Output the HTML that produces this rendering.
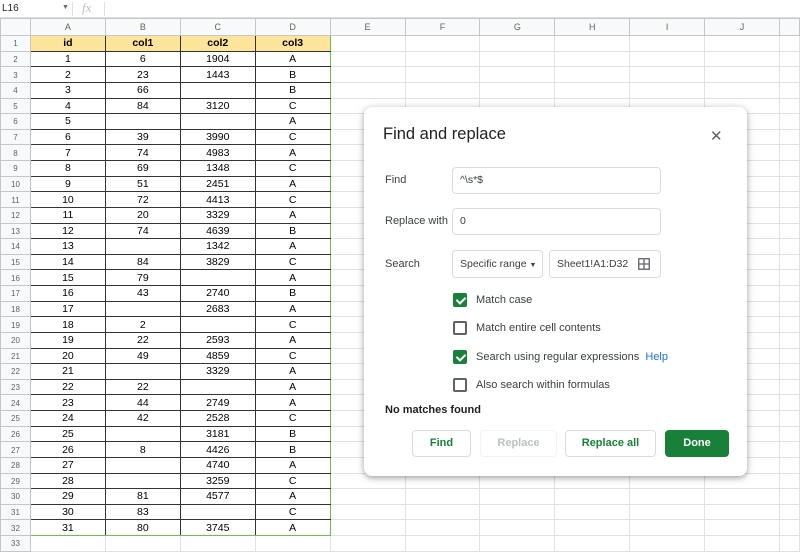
<!DOCTYPE html>
<html><head><meta charset="utf-8"><style>
*{box-sizing:border-box;margin:0;padding:0}
body{width:800px;height:548px;overflow:hidden;background:#fff;font-family:"Liberation Sans",Arial,sans-serif;position:relative}
.fb{position:absolute;left:0;top:0;width:800px;height:18px;border-bottom:1px solid #e0e0e0;background:#fff}
.fb .nm{position:absolute;left:2px;top:3px;font-size:10px;color:#222}
.fb .ar{position:absolute;left:62px;top:4px;font-size:7px;color:#666}
.fb .sep{position:absolute;left:72px;top:2px;width:1px;height:14px;background:#e0e0e0}
.fb .fx{position:absolute;left:82px;top:0px;font-size:13px;color:#c0c0c0;font-style:italic;font-family:"Liberation Serif",serif}
.fb .sep2{position:absolute;left:104px;top:2px;width:1px;height:14px;background:#e0e0e0}
table{position:absolute;left:0;top:18px;border-collapse:collapse;table-layout:fixed}
td{border:1px solid #e2e2e2;height:15.63px;font-size:10.5px;text-align:center;color:#000;padding:1px 0 0 0;line-height:13px;overflow:hidden;white-space:nowrap}
tr.h td{height:17px;background:#f8f9fa;color:#5f6368;font-size:9px;border-color:#c4c7c5}
td.r{background:#f8f9fa;color:#5f6368;font-size:8px;border-color:#c4c7c5}
td.d{border:1px solid #333}
tr.t td.d{background:#fde49b;font-weight:bold}
td.g{border-right:1px solid #6cc14b}
tr.last td.d{border-bottom:1px solid #6cc14b}
.dlg{position:absolute;left:364px;top:107px;width:383px;height:369px;background:#fff;border-radius:8px;box-shadow:0 2px 6px rgba(0,0,0,.3),0 1px 12px rgba(0,0,0,.1);color:#3c4043}
.dlg .ttl{position:absolute;left:19px;top:18px;font-size:16.5px;color:#202124}
.dlg .x{position:absolute;left:346px;top:20px;font-size:15px;color:#5f6368}
.lb{position:absolute;left:21px;font-size:11px;color:#3c4043}
.in{position:absolute;border:1px solid #dadce0;border-radius:4px;font-size:10.5px;padding-left:7px;color:#3c4043}
.cb{position:absolute;left:89px;width:14px;height:14px;border:2px solid #5f6368;border-radius:2px}
.cb.on{background:#188038;border-color:#188038}
.cb.on:after{content:"";position:absolute;left:3px;top:0px;width:4px;height:7px;border:solid #fff;border-width:0 2px 2px 0;transform:rotate(45deg)}
.cl{position:absolute;left:112px;font-size:11px;color:#3c4043}
.bt{position:absolute;top:323px;height:27px;border:1px solid #dadce0;border-radius:4px;font-size:11px;font-weight:bold;color:#188038;text-align:center;line-height:25px}
</style></head><body>
<div class="fb"><span class="nm">L16</span><span class="ar">▼</span><span class="sep"></span><span class="fx">fx</span><span class="sep2"></span></div>
<table>
<colgroup><col style="width:30px"><col style="width:75px"><col style="width:75px"><col style="width:75px"><col style="width:75px"><col style="width:75px"><col style="width:75px"><col style="width:75px"><col style="width:75px"><col style="width:75px"><col style="width:75px"><col style="width:20px"></colgroup>
<tr class="h"><td></td><td>A</td><td>B</td><td>C</td><td>D</td><td>E</td><td>F</td><td>G</td><td>H</td><td>I</td><td>J</td><td></td></tr>
<tr class="t"><td class="r">1</td><td class="d">id</td><td class="d">col1</td><td class="d">col2</td><td class="d g">col3</td><td></td><td></td><td></td><td></td><td></td><td></td><td></td></tr>
<tr><td class="r">2</td><td class="d">1</td><td class="d">6</td><td class="d">1904</td><td class="d g">A</td><td></td><td></td><td></td><td></td><td></td><td></td><td></td></tr>
<tr><td class="r">3</td><td class="d">2</td><td class="d">23</td><td class="d">1443</td><td class="d g">B</td><td></td><td></td><td></td><td></td><td></td><td></td><td></td></tr>
<tr><td class="r">4</td><td class="d">3</td><td class="d">66</td><td class="d"></td><td class="d g">B</td><td></td><td></td><td></td><td></td><td></td><td></td><td></td></tr>
<tr><td class="r">5</td><td class="d">4</td><td class="d">84</td><td class="d">3120</td><td class="d g">C</td><td></td><td></td><td></td><td></td><td></td><td></td><td></td></tr>
<tr><td class="r">6</td><td class="d">5</td><td class="d"></td><td class="d"></td><td class="d g">A</td><td></td><td></td><td></td><td></td><td></td><td></td><td></td></tr>
<tr><td class="r">7</td><td class="d">6</td><td class="d">39</td><td class="d">3990</td><td class="d g">C</td><td></td><td></td><td></td><td></td><td></td><td></td><td></td></tr>
<tr><td class="r">8</td><td class="d">7</td><td class="d">74</td><td class="d">4983</td><td class="d g">A</td><td></td><td></td><td></td><td></td><td></td><td></td><td></td></tr>
<tr><td class="r">9</td><td class="d">8</td><td class="d">69</td><td class="d">1348</td><td class="d g">C</td><td></td><td></td><td></td><td></td><td></td><td></td><td></td></tr>
<tr><td class="r">10</td><td class="d">9</td><td class="d">51</td><td class="d">2451</td><td class="d g">A</td><td></td><td></td><td></td><td></td><td></td><td></td><td></td></tr>
<tr><td class="r">11</td><td class="d">10</td><td class="d">72</td><td class="d">4413</td><td class="d g">C</td><td></td><td></td><td></td><td></td><td></td><td></td><td></td></tr>
<tr><td class="r">12</td><td class="d">11</td><td class="d">20</td><td class="d">3329</td><td class="d g">A</td><td></td><td></td><td></td><td></td><td></td><td></td><td></td></tr>
<tr><td class="r">13</td><td class="d">12</td><td class="d">74</td><td class="d">4639</td><td class="d g">B</td><td></td><td></td><td></td><td></td><td></td><td></td><td></td></tr>
<tr><td class="r">14</td><td class="d">13</td><td class="d"></td><td class="d">1342</td><td class="d g">A</td><td></td><td></td><td></td><td></td><td></td><td></td><td></td></tr>
<tr><td class="r">15</td><td class="d">14</td><td class="d">84</td><td class="d">3829</td><td class="d g">C</td><td></td><td></td><td></td><td></td><td></td><td></td><td></td></tr>
<tr><td class="r">16</td><td class="d">15</td><td class="d">79</td><td class="d"></td><td class="d g">A</td><td></td><td></td><td></td><td></td><td></td><td></td><td></td></tr>
<tr><td class="r">17</td><td class="d">16</td><td class="d">43</td><td class="d">2740</td><td class="d g">B</td><td></td><td></td><td></td><td></td><td></td><td></td><td></td></tr>
<tr><td class="r">18</td><td class="d">17</td><td class="d"></td><td class="d">2683</td><td class="d g">A</td><td></td><td></td><td></td><td></td><td></td><td></td><td></td></tr>
<tr><td class="r">19</td><td class="d">18</td><td class="d">2</td><td class="d"></td><td class="d g">C</td><td></td><td></td><td></td><td></td><td></td><td></td><td></td></tr>
<tr><td class="r">20</td><td class="d">19</td><td class="d">22</td><td class="d">2593</td><td class="d g">A</td><td></td><td></td><td></td><td></td><td></td><td></td><td></td></tr>
<tr><td class="r">21</td><td class="d">20</td><td class="d">49</td><td class="d">4859</td><td class="d g">C</td><td></td><td></td><td></td><td></td><td></td><td></td><td></td></tr>
<tr><td class="r">22</td><td class="d">21</td><td class="d"></td><td class="d">3329</td><td class="d g">A</td><td></td><td></td><td></td><td></td><td></td><td></td><td></td></tr>
<tr><td class="r">23</td><td class="d">22</td><td class="d">22</td><td class="d"></td><td class="d g">A</td><td></td><td></td><td></td><td></td><td></td><td></td><td></td></tr>
<tr><td class="r">24</td><td class="d">23</td><td class="d">44</td><td class="d">2749</td><td class="d g">A</td><td></td><td></td><td></td><td></td><td></td><td></td><td></td></tr>
<tr><td class="r">25</td><td class="d">24</td><td class="d">42</td><td class="d">2528</td><td class="d g">C</td><td></td><td></td><td></td><td></td><td></td><td></td><td></td></tr>
<tr><td class="r">26</td><td class="d">25</td><td class="d"></td><td class="d">3181</td><td class="d g">B</td><td></td><td></td><td></td><td></td><td></td><td></td><td></td></tr>
<tr><td class="r">27</td><td class="d">26</td><td class="d">8</td><td class="d">4426</td><td class="d g">B</td><td></td><td></td><td></td><td></td><td></td><td></td><td></td></tr>
<tr><td class="r">28</td><td class="d">27</td><td class="d"></td><td class="d">4740</td><td class="d g">A</td><td></td><td></td><td></td><td></td><td></td><td></td><td></td></tr>
<tr><td class="r">29</td><td class="d">28</td><td class="d"></td><td class="d">3259</td><td class="d g">C</td><td></td><td></td><td></td><td></td><td></td><td></td><td></td></tr>
<tr><td class="r">30</td><td class="d">29</td><td class="d">81</td><td class="d">4577</td><td class="d g">A</td><td></td><td></td><td></td><td></td><td></td><td></td><td></td></tr>
<tr><td class="r">31</td><td class="d">30</td><td class="d">83</td><td class="d"></td><td class="d g">C</td><td></td><td></td><td></td><td></td><td></td><td></td><td></td></tr>
<tr class="last"><td class="r">32</td><td class="d">31</td><td class="d">80</td><td class="d">3745</td><td class="d g">A</td><td></td><td></td><td></td><td></td><td></td><td></td><td></td></tr>
<tr><td class="r">33</td><td></td><td></td><td></td><td></td><td></td><td></td><td></td><td></td><td></td><td></td><td></td></tr>
</table>
<div class="dlg">
<div class="ttl">Find and replace</div>
<div class="x">✕</div>
<div class="lb" style="top:67px">Find</div>
<div class="in" style="left:88px;top:60px;width:209px;height:27px;line-height:25px">^\s*$</div>
<div class="lb" style="top:108px">Replace with</div>
<div class="in" style="left:88px;top:101px;width:209px;height:27px;line-height:25px">0</div>
<div class="lb" style="top:151px">Search</div>
<div class="in" style="left:88px;top:143px;width:91px;height:28px;line-height:26px">Specific range <span style="font-size:7px">▼</span></div>
<div class="in" style="left:185px;top:143px;width:112px;height:28px;line-height:26px">Sheet1!A1:D32
<svg style="position:absolute;left:88px;top:7px" width="12" height="12" viewBox="0 0 12 12"><rect x="0.75" y="0.75" width="10.5" height="10.5" fill="none" stroke="#5f6368" stroke-width="1.3"/><path d="M6 1v10M1 6h10" stroke="#5f6368" stroke-width="1.3"/></svg></div>
<div class="cb on" style="top:186px"></div><div class="cl" style="top:187px">Match case</div>
<div class="cb" style="top:214px"></div><div class="cl" style="top:215px">Match entire cell contents</div>
<div class="cb on" style="top:243px"></div><div class="cl" style="top:244px">Search using regular expressions &nbsp;<span style="color:#1a73e8">Help</span></div>
<div class="cb" style="top:271px"></div><div class="cl" style="top:272px">Also search within formulas</div>
<div class="lb" style="top:297px;font-weight:bold;color:#202124">No matches found</div>
<div class="bt" style="left:48px;width:59px">Find</div>
<div class="bt" style="left:116px;width:77px;color:#bdc1c6;border-color:#f1f3f4">Replace</div>
<div class="bt" style="left:201px;width:91px">Replace all</div>
<div class="bt" style="left:301px;width:64px;background:#188038;border-color:#188038;color:#fff">Done</div>
</div>
</body></html>
